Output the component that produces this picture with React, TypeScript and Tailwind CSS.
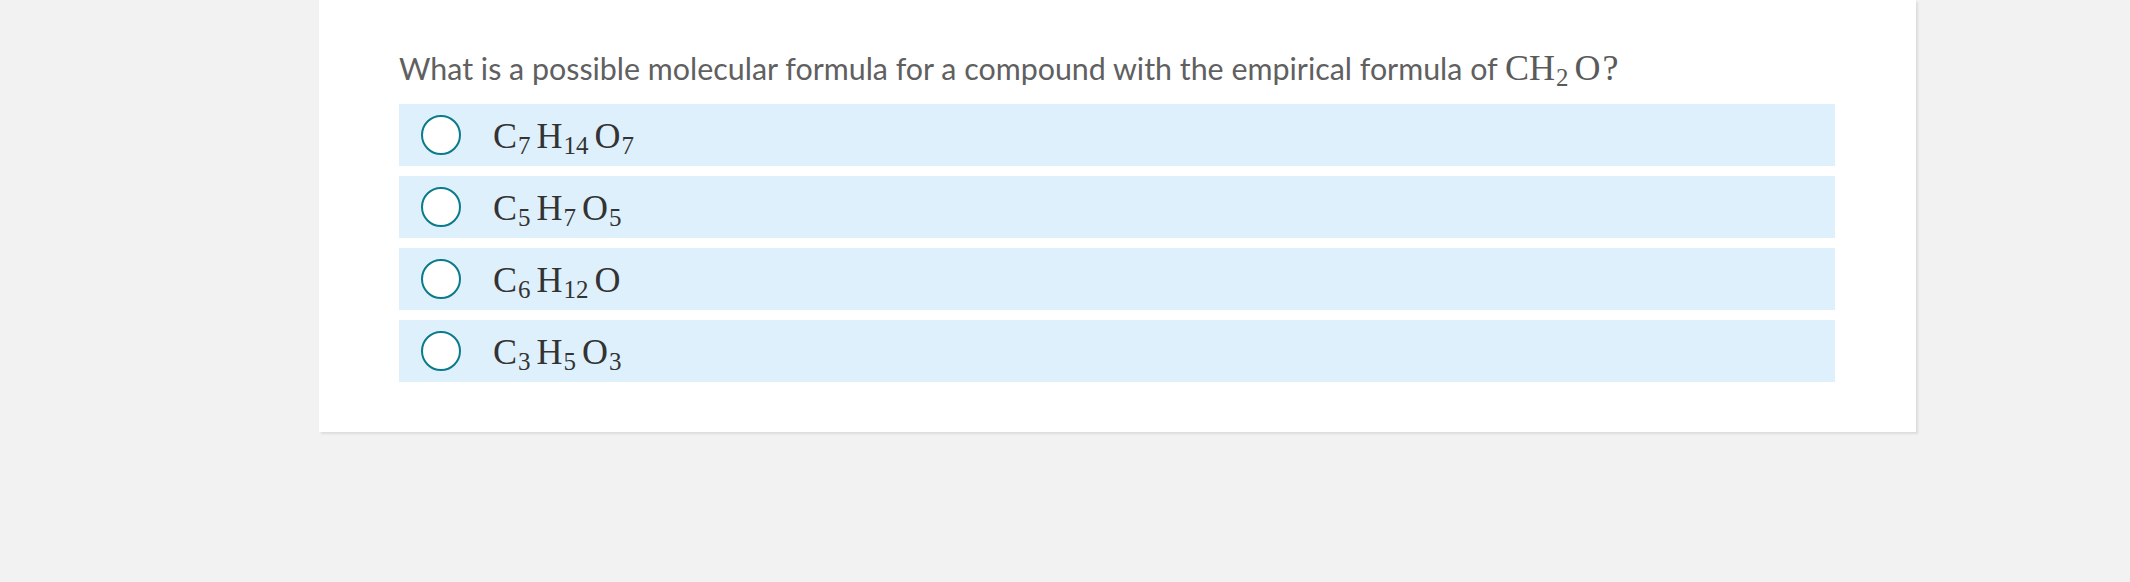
import React from "react";

type Part = { el: string; n?: string };

function Formula({ parts }: { parts: Part[] }) {
  return (
    <span className="inline-flex items-baseline" style={{ fontFamily: '"Liberation Serif", serif' }}>
      {parts.map((p, i) => (
        <span key={i} className="inline-flex items-baseline">
          <span>{p.el}</span>
          {p.n ? <span className="text-[25px] relative top-[6px] ml-[1px] mr-[6px]">{p.n}</span> : null}
        </span>
      ))}
    </span>
  );
}

const options: Part[][] = [
  [{ el: "C", n: "7" }, { el: "H", n: "14" }, { el: "O", n: "7" }],
  [{ el: "C", n: "5" }, { el: "H", n: "7" }, { el: "O", n: "5" }],
  [{ el: "C", n: "6" }, { el: "H", n: "12" }, { el: "O" }],
  [{ el: "C", n: "3" }, { el: "H", n: "5" }, { el: "O", n: "3" }],
];

export default function App() {
  return (
    <div className="w-[2130px] h-[582px] bg-[#f2f2f2] overflow-hidden">
      <div className="ml-[319px] w-[1597px] h-[432px] bg-white shadow-[2px_2px_2px_rgba(0,0,0,0.09)] pl-[80px] pr-[81px] pt-[40px]">
        <div
          className="text-[30.4px] leading-[52px] text-[#606060] h-[64px] flex items-baseline"
          style={{ fontFamily: '"Source Sans Pro", Lato, sans-serif' }}
        >
          <span>What is a possible molecular formula for a compound with the empirical formula of&nbsp;</span>
          <span className="text-[36px] text-[#5a5a5a]">
            <Formula parts={[{ el: "C" }, { el: "H", n: "2" }, { el: "O" }]} />
            <span className="ml-[2px]" style={{ fontFamily: '"Liberation Serif", serif' }}>?</span>
          </span>
        </div>
        <div className="flex flex-col gap-[10px]">
          {options.map((o, i) => (
            <div key={i} className="h-[62px] bg-[#dff0fd] flex items-center pl-[22px]">
              <div className="w-[40px] h-[40px] rounded-full border-2 border-[#0b7a8b] bg-white shrink-0" />
              <div className="ml-[32px] text-[36px] text-[#333] leading-none">
                <Formula parts={o} />
              </div>
            </div>
          ))}
        </div>
      </div>
    </div>
  );
}
